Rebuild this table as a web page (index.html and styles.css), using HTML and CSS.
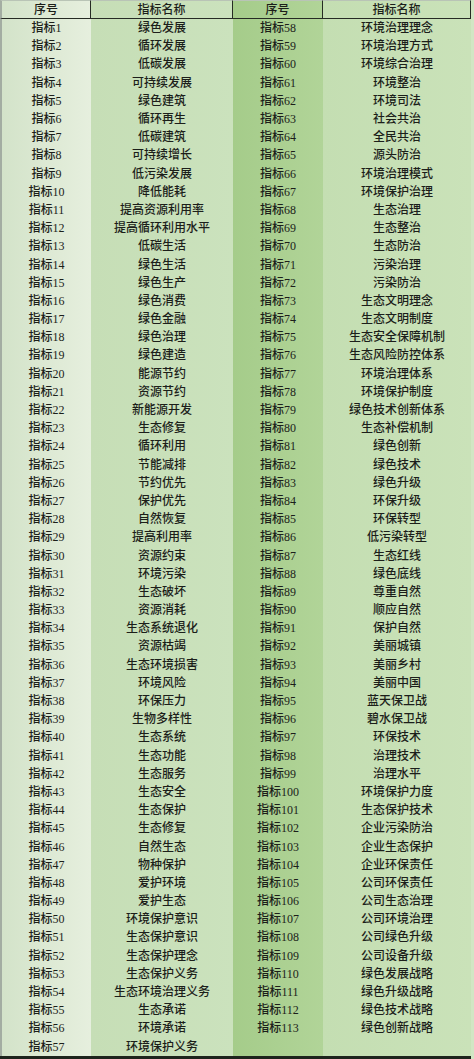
FILE: index.html
```html
<!DOCTYPE html>
<html lang="zh-CN">
<head>
<meta charset="utf-8">
<title>指标</title>
<link rel="stylesheet" href="styles.css">
</head>
<body>
<div class="sheet">
<div class="row head"><div>序号</div><div>指标名称</div><div>序号</div><div>指标名称</div></div>
<div class="row"><div>指标1</div><div>绿色发展</div><div>指标58</div><div>环境治理理念</div></div>
<div class="row"><div>指标2</div><div>循环发展</div><div>指标59</div><div>环境治理方式</div></div>
<div class="row"><div>指标3</div><div>低碳发展</div><div>指标60</div><div>环境综合治理</div></div>
<div class="row"><div>指标4</div><div>可持续发展</div><div>指标61</div><div>环境整治</div></div>
<div class="row"><div>指标5</div><div>绿色建筑</div><div>指标62</div><div>环境司法</div></div>
<div class="row"><div>指标6</div><div>循环再生</div><div>指标63</div><div>社会共治</div></div>
<div class="row"><div>指标7</div><div>低碳建筑</div><div>指标64</div><div>全民共治</div></div>
<div class="row"><div>指标8</div><div>可持续增长</div><div>指标65</div><div>源头防治</div></div>
<div class="row"><div>指标9</div><div>低污染发展</div><div>指标66</div><div>环境治理模式</div></div>
<div class="row"><div>指标10</div><div>降低能耗</div><div>指标67</div><div>环境保护治理</div></div>
<div class="row"><div>指标11</div><div>提高资源利用率</div><div>指标68</div><div>生态治理</div></div>
<div class="row"><div>指标12</div><div>提高循环利用水平</div><div>指标69</div><div>生态整治</div></div>
<div class="row"><div>指标13</div><div>低碳生活</div><div>指标70</div><div>生态防治</div></div>
<div class="row"><div>指标14</div><div>绿色生活</div><div>指标71</div><div>污染治理</div></div>
<div class="row"><div>指标15</div><div>绿色生产</div><div>指标72</div><div>污染防治</div></div>
<div class="row"><div>指标16</div><div>绿色消费</div><div>指标73</div><div>生态文明理念</div></div>
<div class="row"><div>指标17</div><div>绿色金融</div><div>指标74</div><div>生态文明制度</div></div>
<div class="row"><div>指标18</div><div>绿色治理</div><div>指标75</div><div>生态安全保障机制</div></div>
<div class="row"><div>指标19</div><div>绿色建造</div><div>指标76</div><div>生态风险防控体系</div></div>
<div class="row"><div>指标20</div><div>能源节约</div><div>指标77</div><div>环境治理体系</div></div>
<div class="row"><div>指标21</div><div>资源节约</div><div>指标78</div><div>环境保护制度</div></div>
<div class="row"><div>指标22</div><div>新能源开发</div><div>指标79</div><div>绿色技术创新体系</div></div>
<div class="row"><div>指标23</div><div>生态修复</div><div>指标80</div><div>生态补偿机制</div></div>
<div class="row"><div>指标24</div><div>循环利用</div><div>指标81</div><div>绿色创新</div></div>
<div class="row"><div>指标25</div><div>节能减排</div><div>指标82</div><div>绿色技术</div></div>
<div class="row"><div>指标26</div><div>节约优先</div><div>指标83</div><div>绿色升级</div></div>
<div class="row"><div>指标27</div><div>保护优先</div><div>指标84</div><div>环保升级</div></div>
<div class="row"><div>指标28</div><div>自然恢复</div><div>指标85</div><div>环保转型</div></div>
<div class="row"><div>指标29</div><div>提高利用率</div><div>指标86</div><div>低污染转型</div></div>
<div class="row"><div>指标30</div><div>资源约束</div><div>指标87</div><div>生态红线</div></div>
<div class="row"><div>指标31</div><div>环境污染</div><div>指标88</div><div>绿色底线</div></div>
<div class="row"><div>指标32</div><div>生态破坏</div><div>指标89</div><div>尊重自然</div></div>
<div class="row"><div>指标33</div><div>资源消耗</div><div>指标90</div><div>顺应自然</div></div>
<div class="row"><div>指标34</div><div>生态系统退化</div><div>指标91</div><div>保护自然</div></div>
<div class="row"><div>指标35</div><div>资源枯竭</div><div>指标92</div><div>美丽城镇</div></div>
<div class="row"><div>指标36</div><div>生态环境损害</div><div>指标93</div><div>美丽乡村</div></div>
<div class="row"><div>指标37</div><div>环境风险</div><div>指标94</div><div>美丽中国</div></div>
<div class="row"><div>指标38</div><div>环保压力</div><div>指标95</div><div>蓝天保卫战</div></div>
<div class="row"><div>指标39</div><div>生物多样性</div><div>指标96</div><div>碧水保卫战</div></div>
<div class="row"><div>指标40</div><div>生态系统</div><div>指标97</div><div>环保技术</div></div>
<div class="row"><div>指标41</div><div>生态功能</div><div>指标98</div><div>治理技术</div></div>
<div class="row"><div>指标42</div><div>生态服务</div><div>指标99</div><div>治理水平</div></div>
<div class="row"><div>指标43</div><div>生态安全</div><div>指标100</div><div>环境保护力度</div></div>
<div class="row"><div>指标44</div><div>生态保护</div><div>指标101</div><div>生态保护技术</div></div>
<div class="row"><div>指标45</div><div>生态修复</div><div>指标102</div><div>企业污染防治</div></div>
<div class="row"><div>指标46</div><div>自然生态</div><div>指标103</div><div>企业生态保护</div></div>
<div class="row"><div>指标47</div><div>物种保护</div><div>指标104</div><div>企业环保责任</div></div>
<div class="row"><div>指标48</div><div>爱护环境</div><div>指标105</div><div>公司环保责任</div></div>
<div class="row"><div>指标49</div><div>爱护生态</div><div>指标106</div><div>公司生态治理</div></div>
<div class="row"><div>指标50</div><div>环境保护意识</div><div>指标107</div><div>公司环境治理</div></div>
<div class="row"><div>指标51</div><div>生态保护意识</div><div>指标108</div><div>公司绿色升级</div></div>
<div class="row"><div>指标52</div><div>生态保护理念</div><div>指标109</div><div>公司设备升级</div></div>
<div class="row"><div>指标53</div><div>生态保护义务</div><div>指标110</div><div>绿色发展战略</div></div>
<div class="row"><div>指标54</div><div>生态环境治理义务</div><div>指标111</div><div>绿色升级战略</div></div>
<div class="row"><div>指标55</div><div>生态承诺</div><div>指标112</div><div>绿色技术战略</div></div>
<div class="row"><div>指标56</div><div>环境承诺</div><div>指标113</div><div>绿色创新战略</div></div>
<div class="row"><div>指标57</div><div>环境保护义务</div><div></div><div></div></div>
</div>
</body>
</html>
```

FILE: styles.css
```css
html, body {
  margin: 0;
  padding: 0;
}
body {
  background: #d2e6c4;
  font-family: "Liberation Serif", "Noto Sans CJK SC", serif;
  font-size: 12px;
  font-weight: 500;
  color: #1c1e1a;
  width: 474px;
  height: 1059px;
  overflow: hidden;
}
.sheet {
  display: grid;
  grid-template-columns: 91px 142px 90px 148px;
  grid-template-rows: 19px;
  grid-auto-rows: 18.2px;
  width: 471px;
  border-bottom: 3px solid #1d241c;
}
.row {
  display: contents;
}
.row > div {
  box-sizing: border-box;
  display: flex;
  align-items: center;
  justify-content: center;
  white-space: nowrap;
  line-height: 1;
}
.row > div:nth-child(1) {
  background: linear-gradient(to right, #d3e3c9, #e6efde);
  border-left: 2px solid #a3ada2;
}
.row > div:nth-child(2) {
  background: linear-gradient(to right, #c6deb6, #cbe2bd);
}
.row > div:nth-child(3) {
  background: linear-gradient(to right, #a5cc8a, #b1d498);
}
.row > div:nth-child(4) {
  background: linear-gradient(to right, #c4deb2, #cae2b9);
}
.head > div {
  border-top: 1px solid #b9c4b6;
  border-bottom: 1px solid #262b24;
  border-right: 1px solid #262b24;
}
```
